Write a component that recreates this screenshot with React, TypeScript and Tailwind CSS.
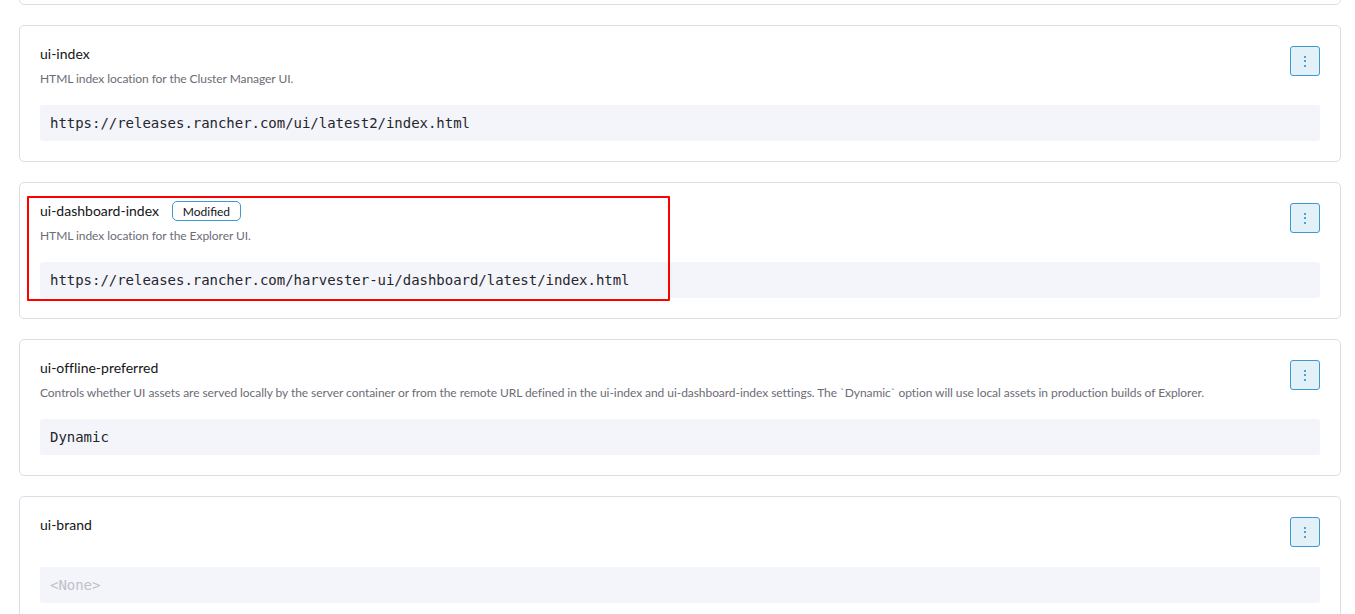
import React from 'react';

interface SettingCardProps {
    name: string;
    description?: string;
    value: string;
    modified?: boolean;
    isDefaultEmpty?: boolean;
}

const ActionButton = () => {
    return (
        <div className="absolute right-[35px] mt-[1px] flex h-[30px] w-[30px] flex-col items-center justify-center gap-[2.5px] rounded-[3px] border border-[#3d98d3] bg-[#e2f0f8]">
            <span className="h-[2px] w-[2px] bg-[#4f9fd8]" />
            <span className="h-[2px] w-[2px] bg-[#4f9fd8]" />
            <span className="h-[2px] w-[2px] bg-[#4f9fd8]" />
        </div>
    );
};

const SettingCard = ({ name, description, value, modified, isDefaultEmpty }: SettingCardProps) => {
    return (
        <div className="flex h-[137px] shrink-0 rounded-[5px] border border-[#dcdee7] bg-white pt-[19px] pr-[20px] pb-[20px] pl-[20px]">
            <div className="min-w-0 flex-1">
                <div className={`flex h-[18px] items-center ${description ? 'mb-[7px]' : 'mb-[33px]'}`}>
                    <span className="pb-[2px] text-[14px] text-[#141419] [font-variant-ligatures:none]">{name}</span>
                    {modified && (
                        <span className="ml-[13px] flex h-[20px] w-[69px] items-center justify-center rounded-[5px] border border-[#3d98d3] pt-[1px] text-[12px] text-[#141419]">
                            Modified
                        </span>
                    )}
                </div>
                {description && (
                    <p className="mb-[17px] h-[18px] text-[12px] leading-[18px] tracking-[-0.06px] text-[#6c6c76]">{description}</p>
                )}
                <div
                    className={`h-[36px] rounded-[3px] bg-[#f4f5fa] px-[10px] font-['DejaVu_Sans_Mono',monospace] text-[14px] leading-[36px] tracking-[-0.03px] ${isDefaultEmpty ? 'text-[#c0c0cc]' : 'text-[#26262e]'}`}
                >
                    {value}
                </div>
            </div>
            <ActionButton />
        </div>
    );
};

const App = () => {
    return (
        <div className="relative h-[614px] overflow-hidden bg-white font-['Lato',sans-serif]">
            <div className="mt-[-132px] flex flex-col gap-[20px] pr-[14px] pl-[19px]">
                <div className="h-[137px] shrink-0 rounded-[5px] border border-[#dcdee7] bg-white" />
                <SettingCard
                    name="ui-index"
                    description="HTML index location for the Cluster Manager UI."
                    value="https://releases.rancher.com/ui/latest2/index.html"
                />
                <SettingCard
                    name="ui-dashboard-index"
                    description="HTML index location for the Explorer UI."
                    value="https://releases.rancher.com/harvester-ui/dashboard/latest/index.html"
                    modified
                />
                <SettingCard
                    name="ui-offline-preferred"
                    description="Controls whether UI assets are served locally by the server container or from the remote URL defined in the ui-index and ui-dashboard-index settings. The `Dynamic` option will use local assets in production builds of Explorer."
                    value="Dynamic"
                />
                <SettingCard name="ui-brand" value="<None>" isDefaultEmpty />
            </div>
            {/* annotation box drawn over the page */}
            <div className="absolute top-[196px] left-[27px] h-[105px] w-[643px] rounded-[1px] border-[2px] border-[#ff0000]" />
        </div>
    );
};

export default App;
